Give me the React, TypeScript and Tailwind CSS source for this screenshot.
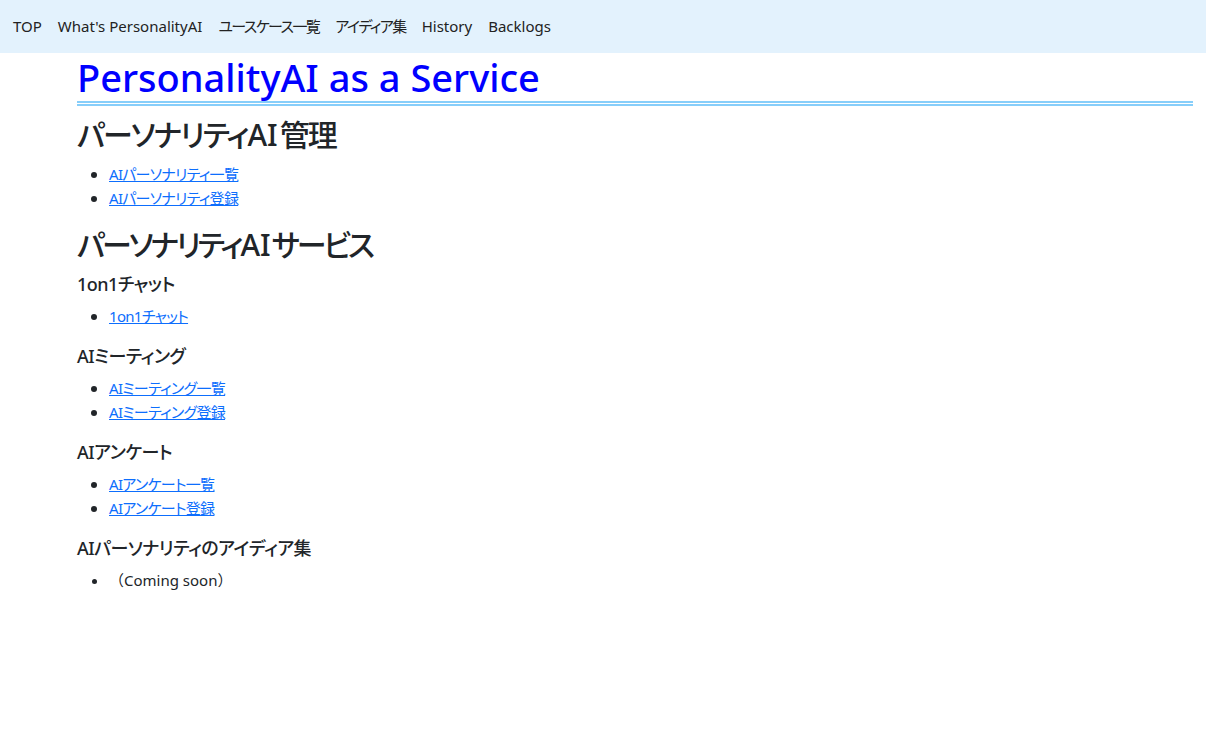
import React from "react";

const navItems: { label: string; jp?: boolean }[] = [
  { label: "TOP" },
  { label: "What's PersonalityAI" },
  { label: "ユースケース一覧", jp: true },
  { label: "アイディア集", jp: true },
  { label: "History" },
  { label: "Backlogs" },
];

function LinkItem({ children }: { children: React.ReactNode }) {
  return (
    <li className="leading-6">
      <a href="#" className="text-[#0d6efd] underline text-[15px] tracking-[-0.7px]">{children}</a>
    </li>
  );
}

export default function App() {
  return (
    <div className="min-h-[756px] bg-white text-[#212529] font-['Noto_Sans','Noto_Sans_CJK_JP',sans-serif] [font-feature-settings:'palt'] text-[16px]">
      <nav className="h-[53px] bg-[#e3f2fd] flex items-center px-[5px] pb-[1px]">
        {navItems.map((n) => (
          <a
            key={n.label}
            href="#"
            className={n.jp ? "px-2 text-[15px] text-[#222] tracking-[-1.6px]" : "px-2 text-[15px] text-[#222]"}
          >
            {n.label}
          </a>
        ))}
      </nav>
      <main className="ml-[77px] mr-[13px]">
        <h1 className="text-[38px] leading-[48px] font-medium text-[#0000ff] border-b-[5px] border-double border-[#87cefa] mb-[10px]">
          PersonalityAI as a Service
        </h1>
        <h2 className="text-[30px] leading-[38px] font-medium mb-2 tracking-[-2px]">
          パーソナリティ<span className="tracking-[0px] mr-[2px]">AI</span>管理
        </h2>
        <ul className="list-disc pl-8 mb-4">
          <LinkItem>AIパーソナリティ一覧</LinkItem>
          <LinkItem>AIパーソナリティ登録</LinkItem>
        </ul>
        <h2 className="text-[30px] leading-[38px] font-medium mb-2 tracking-[-3px]">
          パーソナリティ<span className="tracking-[0px] mr-[1px]">AI</span>サービス
        </h2>
        <h5 className="text-[18px] leading-6 font-medium mb-2 tracking-[-0.5px]">1on1チャット</h5>
        <ul className="list-disc pl-8 mb-4">
          <LinkItem>1on1チャット</LinkItem>
        </ul>
        <h5 className="text-[18px] leading-6 font-medium mb-2 tracking-[-0.5px]">AIミーティング</h5>
        <ul className="list-disc pl-8 mb-4">
          <LinkItem>AIミーティング一覧</LinkItem>
          <LinkItem>AIミーティング登録</LinkItem>
        </ul>
        <h5 className="text-[18px] leading-6 font-medium mb-2 tracking-[-0.5px]">AIアンケート</h5>
        <ul className="list-disc pl-8 mb-4">
          <LinkItem>AIアンケート一覧</LinkItem>
          <LinkItem>AIアンケート登録</LinkItem>
        </ul>
        <h5 className="text-[18px] leading-6 font-medium mb-2 tracking-[-0.5px]">AIパーソナリティのアイディア集</h5>
        <ul className="list-disc pl-8 mb-4">
          <li className="leading-6 [font-feature-settings:normal] text-[15px]">（Coming soon）</li>
        </ul>
      </main>
    </div>
  );
}
